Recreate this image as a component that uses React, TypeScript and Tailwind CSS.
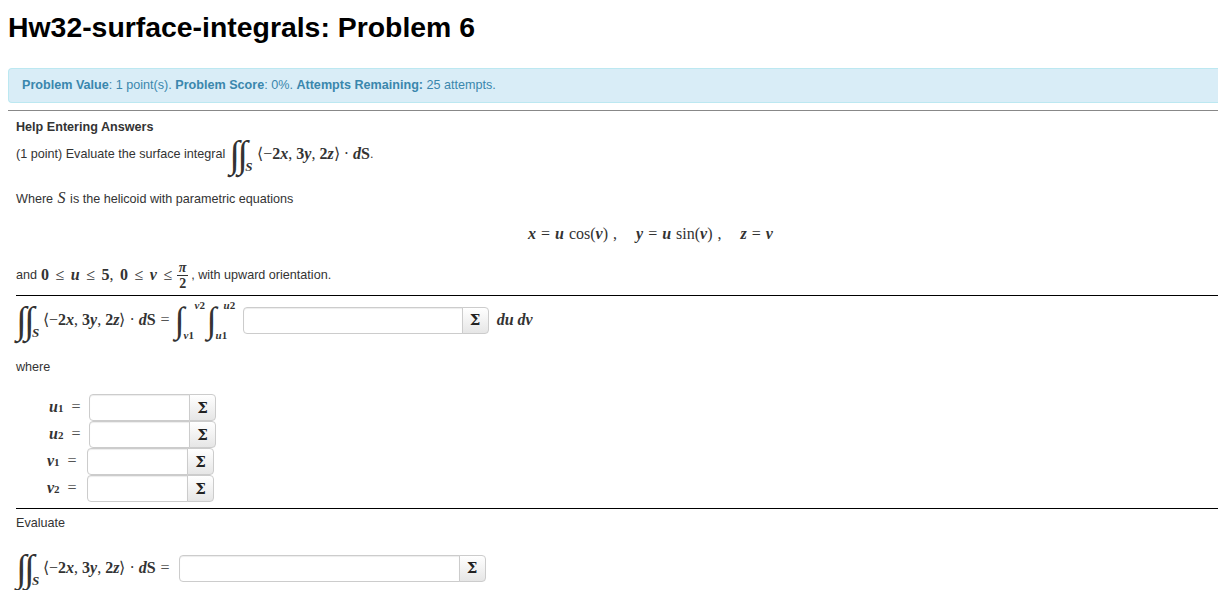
import { type ReactNode } from 'react';

const serif = "font-['Liberation_Serif',serif]";

function I({ children }: { children: ReactNode }) {
  return <i className="font-semibold">{children}</i>;
}

function B({ children }: { children: ReactNode }) {
  return <b>{children}</b>;
}

function Sigma() {
  return (
    <span className="flex w-[27px] h-full -ml-px items-center justify-center border border-[#ccc] rounded-r-[4px] bg-gradient-to-b from-white to-[#e6e6e6] text-[#222] text-[15px] font-bold font-['DejaVu_Serif',serif]">
      Σ
    </span>
  );
}

function AnswerBox({ width }: { width: number }) {
  return (
    <span className="inline-flex h-[27px] items-stretch align-middle">
      <span
        className="block h-full rounded-l-[4px] border border-[#ccc] bg-white shadow-[inset_0_1px_1px_rgba(0,0,0,0.075)]"
        style={{ width }}
      />
      <Sigma />
    </span>
  );
}

function DoubleIntegral() {
  return (
    <span className="relative inline-block h-[36px] w-[27px]">
      <span className={`block italic leading-[36px] text-[38px] tracking-[-2.5px] ${serif}`}>∫∫</span>
      <i className={`absolute left-[16px] bottom-[-1px] text-[13px] font-semibold leading-none ${serif}`}>S</i>
    </span>
  );
}

function Field() {
  return (
    <span className="text-[16px] whitespace-nowrap">
      ⟨−<B>2</B>
      <I>x</I>, <B>3</B>
      <I>y</I>, <B>2</B>
      <I>z</I>⟩ · <I>d</I>
      <B>S</B>
    </span>
  );
}

function Limit({ name, sub, className }: { name: string; sub: number; className: string }) {
  return (
    <span className={className}>
      <i>{name}</i>
      {sub}
    </span>
  );
}

function SingleIntegral({ name, shift }: { name: string; shift: string }) {
  return (
    <span className="inline-flex items-center w-[32px]">
      <span className={`italic text-[36px] leading-none ${serif}`}>∫</span>
      <span className="flex flex-col justify-between h-[42px] text-[11px] leading-[12px] font-semibold">
        <Limit name={name} sub={2} className={shift} />
        <Limit name={name} sub={1} className="-ml-[1px]" />
      </span>
    </span>
  );
}

function LimitRow({ name, sub, shift }: { name: string; sub: number; shift: number }) {
  return (
    <div className="flex h-[27px] items-center" style={{ paddingLeft: shift }}>
      <span className={`flex w-[40px] items-baseline text-[16px] ${serif}`}>
        <I>{name}</I>
        <span className="text-[11px] font-semibold">{sub}</span>
        <span className="ml-[8px] text-[#555]">=</span>
      </span>
      <AnswerBox width={101} />
    </div>
  );
}

export default function App() {
  return (
    <div className="w-[1218px] h-[590px] overflow-hidden bg-white pl-2 text-[12.6px] leading-[18px] text-[#333] font-['Liberation_Sans',Arial,sans-serif]">
      <h1 className="pt-[9px] text-[28.4px] leading-[36px] font-bold text-black">
        Hw32-surface-integrals: Problem 6
      </h1>
      <div className="mt-[23px] flex h-[35px] items-center rounded-l-[4px] border border-r-0 border-[#bce8f1] bg-[#d9edf7] pl-[13px] pb-[2px] text-[#3a87ad]">
        <span>
          <b>Problem Value</b>: 1 point(s). <b>Problem Score</b>: 0%. <b>Attempts Remaining:</b> 25
          attempts.
        </span>
      </div>
      <hr className="mt-[7px] border-t border-[#888]" />

      <div className="pl-2">
        <p className="mt-[7px] font-bold leading-[18px]">Help Entering Answers</p>
        <div className="mt-[1px] flex h-[34px] items-center">
          <span>(1 point) Evaluate the surface integral</span>
          <span className={`ml-[4px] flex items-center ${serif}`}>
            <DoubleIntegral />
            <span className="ml-[1px]">
              <Field />
            </span>
            <span className="font-['Liberation_Sans',sans-serif] text-[12.6px]">.</span>
          </span>
        </div>
        <p className="mt-[18px] h-[18px]">
          Where <i className={`mx-[1px] text-[16px] ${serif}`}>S</i> is the helicoid with parametric equations
        </p>
        <div className={`mt-[18px] flex h-[18px] ml-[512px] gap-[19px] whitespace-pre text-[16px] leading-[18px] [word-spacing:1px] ${serif}`}>
          <span>
            <I>x</I> = <I>u</I> cos(<I>v</I>) ,
          </span>
          <span>
            <I>y</I> = <I>u</I> sin(<I>v</I>) ,
          </span>
          <span>
            <I>z</I> = <I>v</I>
          </span>
        </div>
        <div className="mt-[15px] flex h-[34px] items-center">
          <span>and</span>
          <span className={`ml-[4px] text-[16px] [word-spacing:2.5px] ${serif}`}>
            <B>0</B> ≤ <I>u</I> ≤ <B>5</B>, <B>0</B> ≤ <I>v</I> ≤
          </span>
          <span className={`ml-[5px] flex w-[11px] flex-col items-center text-[14px] leading-[15px] ${serif}`}>
            <span className="italic font-semibold">π</span>
            <span className="w-full border-t border-[#333]" />
            <span className="font-bold">2</span>
          </span>
          <span className="ml-[3px]">, with upward orientation.</span>
        </div>
        <hr className="mt-[3px] border-t border-black -mr-px" />

        <div className={`flex h-[48px] items-center ${serif}`}>
          <DoubleIntegral />
          <Field />
          <span className="ml-[5px] text-[16px] text-[#555]">=</span>
          <span className="ml-[5px] flex">
            <SingleIntegral name="v" shift="ml-[10px]" />
            <SingleIntegral name="u" shift="ml-[7px]" />
          </span>
          <span className="ml-[4px]">
            <AnswerBox width={220} />
          </span>
          <span className="ml-[8px] text-[16px]">
            <I>du dv</I>
          </span>
        </div>

        <p className="mt-[14px] h-[18px]">where</p>

        <div className="mt-[18px]">
          <LimitRow name="u" sub={1} shift={33} />
          <LimitRow name="u" sub={2} shift={33} />
          <LimitRow name="v" sub={1} shift={31} />
          <LimitRow name="v" sub={2} shift={31} />
        </div>
        <hr className="mt-[6px] border-t border-black -mr-px" />

        <p className="mt-[5px] h-[18px]">Evaluate</p>

        <div className={`mt-[12px] flex h-[48px] items-center ${serif}`}>
          <DoubleIntegral />
          <Field />
          <span className="ml-[5px] text-[16px] text-[#555]">=</span>
          <span className="ml-[9px]">
            <AnswerBox width={281} />
          </span>
        </div>
      </div>
    </div>
  );
}
